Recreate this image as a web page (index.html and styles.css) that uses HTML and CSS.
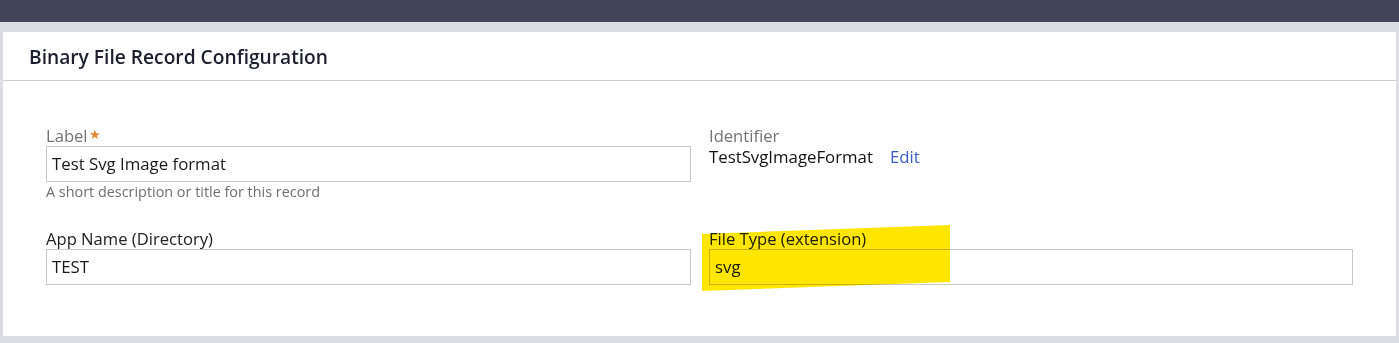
FILE: index.html
```html
<!DOCTYPE html>
<html>
<head>
<meta charset="utf-8">
<link rel="stylesheet" href="styles.css">
</head>
<body>
<div class="topbar"></div>
<div class="panel">
  <div class="panel-header">Binary File Record Configuration</div>
  <div class="panel-body">
    <div class="grid">
      <div class="field">
        <div class="label muted">Label<span class="req">&#9733;</span></div>
        <div class="input">Test Svg Image format</div>
        <div class="help">A short description or title for this record</div>
      </div>
      <div class="field">
        <div class="label muted">Identifier</div>
        <div class="value">TestSvgImageFormat<a class="edit">Edit</a></div>
      </div>
      <div class="field">
        <div class="label">App Name (Directory)</div>
        <div class="input">TEST</div>
      </div>
      <div class="field highlighted">
        <div class="label">File Type (extension)</div>
        <div class="input">svg</div>
        <div class="marker"></div>
      </div>
    </div>
  </div>
</div>
</body>
</html>
```

FILE: styles.css
```css
html, body {
  margin: 0;
  padding: 0;
}
body {
  background: #dcdde2;
  font-family: "Open Sans", "Liberation Sans", sans-serif;
  color: #1b1b24;
  height: 343px;
  overflow: hidden;
}
.topbar {
  height: 22px;
  background: #42445a;
}
.panel {
  margin: 10px 3px 0 3px;
  height: 304px;
  background: #ffffff;
  box-sizing: border-box;
}
.panel-header {
  height: 49px;
  box-sizing: border-box;
  border-bottom: 1px solid #cfcfd2;
  padding: 10px 0 0 26px;
  font-size: 19.2px;
  font-weight: 600;
  line-height: 30px;
  color: #1e1f2e;
}
.panel-body {
  padding: 44px 43px 0 43px;
}
.grid {
  display: grid;
  grid-template-columns: 645px 644px;
  column-gap: 18px;
  row-gap: 27px;
}
.field {
  position: relative;
}
.label {
  height: 21px;
  font-size: 16.6px;
  line-height: 21px;
  color: #222222;
}
.label.muted {
  color: #737373;
}
.req {
  display: inline-block;
  line-height: 1;
  vertical-align: 3px;
  color: #e0892e;
  font-size: 13px;
  margin-left: 1px;
}
.input {
  height: 36px;
  box-sizing: border-box;
  border: 1px solid #c8c8c8;
  padding: 0 5px;
  font-size: 16.8px;
  line-height: 33px;
  color: #1a1a1a;
}
.help {
  margin-top: 1px;
  font-size: 14.4px;
  line-height: 18px;
  color: #6f6f6f;
}
.value {
  font-size: 16.8px;
  line-height: 22px;
  color: #111111;
}
.edit {
  margin-left: 17px;
  color: #3b5cc8;
  cursor: pointer;
}
.marker {
  position: absolute;
  left: -7px;
  top: -3px;
  width: 248px;
  height: 66px;
  background: #ffe600;
  mix-blend-mode: multiply;
  clip-path: polygon(0 9px, 100% 0, 100% 57px, 0 100%);
}
```
